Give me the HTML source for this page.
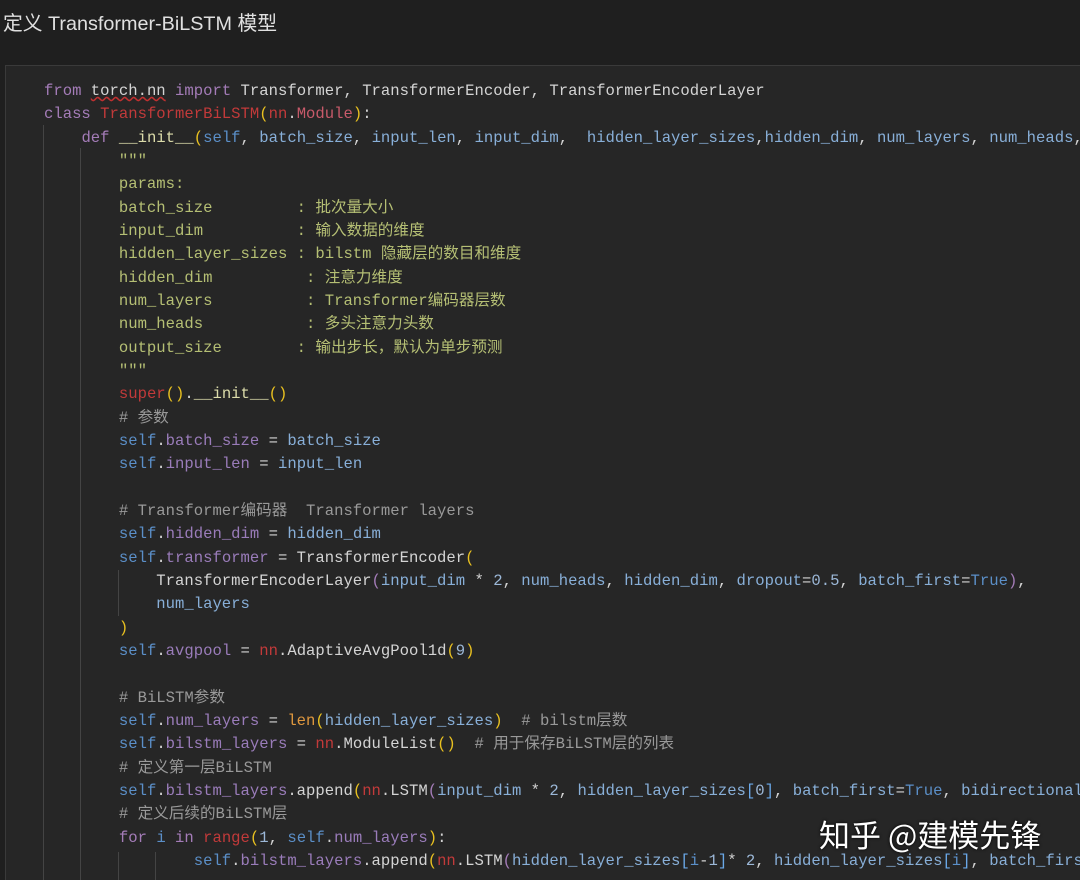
<!DOCTYPE html>
<html><head><meta charset="utf-8"><style>
html,body{margin:0;padding:0;background:#1f1f1f;width:1080px;height:880px;overflow:hidden;position:relative}
.title{position:absolute;left:3px;top:7px;font:19.8px "Liberation Sans","Noto Sans CJK SC",sans-serif;color:#e0e0e0}
.box{position:absolute;left:5px;top:65px;width:1090px;height:830px;background:#262626;border:1px solid #3a3a3a}
pre{position:absolute;left:44px;top:80px;margin:0;font:15.6px/23.33px "Liberation Mono","Noto Sans CJK SC",monospace;color:#d4d4d4;white-space:pre}
.k{color:#a47cb8}.s{color:#5b8fc8}.a{color:#9a7cba}.p{color:#88afd8}.d{color:#b5bf74}.c{color:#999}
.y{color:#e8c020}.r{color:#c23a3a}.f{color:#dcdcaa}.o{color:#e0983e}.n{color:#9cb8d8}.b{color:#6aa8e8}
.g{position:absolute;width:1px;background:#444}
.wm{position:absolute;left:819px;top:811px;font:31px "Noto Sans CJK SC",sans-serif;color:#fff;text-shadow:0 0 3px #000}
</style></head><body>
<div class="title">定义 Transformer-BiLSTM 模型</div>
<div class="box"></div>
<div class="g" style="left:43px;top:125px;height:755px"></div>
<div class="g" style="left:80px;top:148px;height:732px"></div>
<div class="g" style="left:118px;top:570px;height:46px"></div>
<div class="g" style="left:118px;top:852px;height:30px"></div>
<div class="g" style="left:155px;top:852px;height:30px"></div>
<pre><span class="k">from</span> <span style="text-decoration:underline wavy #c03030">torch.nn</span> <span class="k">import</span> Transformer, TransformerEncoder, TransformerEncoderLayer
<span class="k">class</span> <span class="r">TransformerBiLSTM</span><span class="y">(</span><span class="r">nn</span>.<span style="color:#c85a6a">Module</span><span class="y">)</span>:
    <span class="k">def</span> <span class="f">__init__</span><span class="y">(</span><span class="s">self</span>, <span class="p">batch_size</span>, <span class="p">input_len</span>, <span class="p">input_dim</span>,  <span class="p">hidden_layer_sizes</span>,<span class="p">hidden_dim</span>, <span class="p">num_layers</span>, <span class="p">num_heads</span>,
<span class="d">        """
        params:
        batch_size         : 批次量大小
        input_dim          : 输入数据的维度
        hidden_layer_sizes : bilstm 隐藏层的数目和维度
        hidden_dim          : 注意力维度
        num_layers          : Transformer编码器层数
        num_heads           : 多头注意力头数
        output_size        : 输出步长，默认为单步预测
        """</span>
        <span class="r">super</span><span class="y">()</span>.<span class="f">__init__</span><span class="y">()</span>
        <span class="c"># 参数</span>
        <span class="s">self</span>.<span class="a">batch_size</span> = <span class="p">batch_size</span>
        <span class="s">self</span>.<span class="a">input_len</span> = <span class="p">input_len</span>

        <span class="c"># Transformer编码器  Transformer layers</span>
        <span class="s">self</span>.<span class="a">hidden_dim</span> = <span class="p">hidden_dim</span>
        <span class="s">self</span>.<span class="a">transformer</span> = TransformerEncoder<span class="y">(</span>
            TransformerEncoderLayer<span class="k">(</span><span class="p">input_dim</span> * <span class="n">2</span>, <span class="p">num_heads</span>, <span class="p">hidden_dim</span>, <span class="p">dropout</span>=<span class="n">0.5</span>, <span class="p">batch_first</span>=<span class="s">True</span><span class="k">)</span>,
            <span class="p">num_layers</span>
        <span class="y">)</span>
        <span class="s">self</span>.<span class="a">avgpool</span> = <span class="r">nn</span>.AdaptiveAvgPool1d<span class="y">(</span><span class="n">9</span><span class="y">)</span>

        <span class="c"># BiLSTM参数</span>
        <span class="s">self</span>.<span class="a">num_layers</span> = <span class="o">len</span><span class="y">(</span><span class="p">hidden_layer_sizes</span><span class="y">)</span>  <span class="c"># bilstm层数</span>
        <span class="s">self</span>.<span class="a">bilstm_layers</span> = <span class="r">nn</span>.ModuleList<span class="y">()</span>  <span class="c"># 用于保存BiLSTM层的列表</span>
        <span class="c"># 定义第一层BiLSTM</span>
        <span class="s">self</span>.<span class="a">bilstm_layers</span>.append<span class="y">(</span><span class="r">nn</span>.LSTM<span class="k">(</span><span class="p">input_dim</span> * <span class="n">2</span>, <span class="p">hidden_layer_sizes</span><span class="b">[</span><span class="n">0</span><span class="b">]</span>, <span class="p">batch_first</span>=<span class="s">True</span>, <span class="p">bidirectional</span>
        <span class="c"># 定义后续的BiLSTM层</span>
        <span class="k">for</span> <span class="s">i</span> <span class="k">in</span> <span class="r">range</span><span class="y">(</span><span class="n">1</span>, <span class="s">self</span>.<span class="a">num_layers</span><span class="y">)</span>:
                <span class="s">self</span>.<span class="a">bilstm_layers</span>.append<span class="y">(</span><span class="r">nn</span>.LSTM<span class="k">(</span><span class="p">hidden_layer_sizes</span><span class="b">[</span><span class="s">i</span>-<span class="n">1</span><span class="b">]</span>* <span class="n">2</span>, <span class="p">hidden_layer_sizes</span><span class="b">[</span><span class="s">i</span><span class="b">]</span>, <span class="p">batch_first</span></pre>
<div class="wm">知乎 @建模先锋</div>
</body></html>
